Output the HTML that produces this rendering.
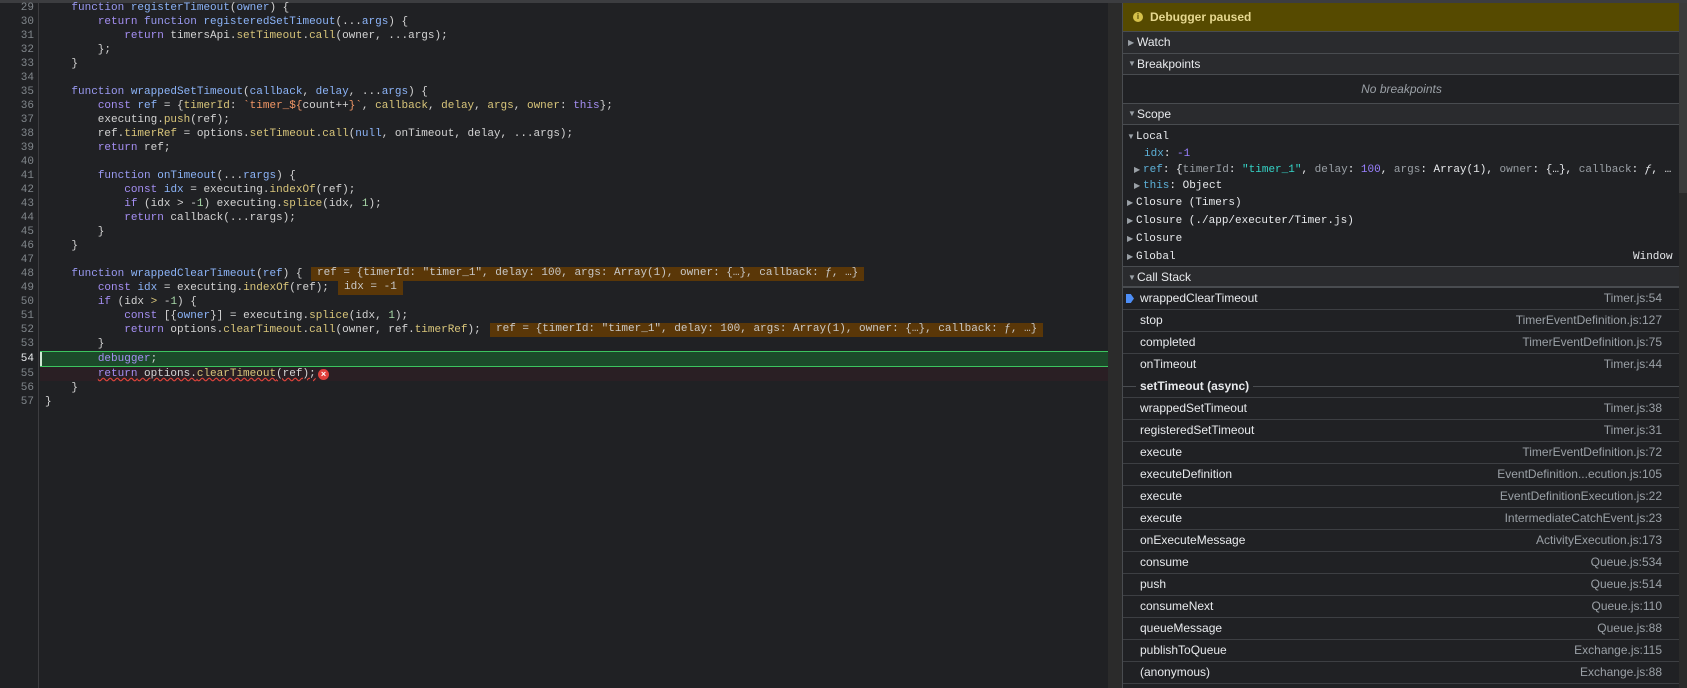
<!DOCTYPE html>
<html><head><meta charset="utf-8"><style>
*{margin:0;padding:0;box-sizing:border-box}
body{width:1687px;height:688px;overflow:hidden;background:#202124;font-family:"Liberation Sans",sans-serif;position:relative}
#top{position:absolute;left:0;top:0;width:1687px;height:3px;background:#3c3d40}
#gut{position:absolute;left:0;top:3px;width:39px;height:685px;background:#202124;border-right:1px solid #3d3d40}
.ln{position:absolute;left:0;width:34px;text-align:right;font:11px "Liberation Mono",monospace;color:#80868b;height:14px;line-height:14px}
.cl{position:absolute;left:45px;font:11px "Liberation Mono",monospace;color:#d4d4d4;white-space:pre;height:14px;line-height:14px}
.k{color:#9a9af2}.r{color:#a58ff3}.f{color:#8cb4f8}.y{color:#d8c57a}.o{color:#f29766}.n{color:#a8d8a8}.b{color:#8cb4f8}
.bd{position:absolute;height:14px;line-height:14px;background:#5a3708;color:#c8c8c8;font:11px "Liberation Mono",monospace;white-space:pre;padding:0 6px}
#div{position:absolute;left:1108px;top:3px;width:14px;height:685px;background:#2b2b2b}
#panel{position:absolute;left:1122px;top:3px;width:557px;height:685px;background:#202124;border-left:1px solid #494c50}
#sb{position:absolute;left:1679px;top:3px;width:8px;height:685px;background:#2a2a2a}
#sbt{position:absolute;left:1679px;top:3px;width:8px;height:190px;background:#3b3b3b}
.hd{position:absolute;left:0;width:557px;background:#2a2b2e;border-bottom:1px solid #494c50;color:#e8eaed;font-size:12px;padding-left:14px}
.hd .tri{position:absolute;left:5px;top:0;font-size:8px;color:#9aa0a6;line-height:inherit}
.t{position:absolute;font-size:8px;color:#9aa0a6;height:16px;line-height:16px}
.m{position:absolute;font:11px "Liberation Mono",monospace;color:#e8eaed;white-space:pre;height:16px;line-height:16px}
.cs{position:absolute;left:0;width:557px;height:22px;line-height:21px;border-bottom:1px solid #3d3f43;font-size:12px;color:#e8eaed}
.cs .nm{position:absolute;left:17px}
.cs .fl{position:absolute;right:18px;color:#9aa0a6}
</style></head><body>
<div id="top"></div>
<div id="gut"></div>
<div style="position:absolute;left:40px;top:351px;width:1068px;height:16px;background:#1c4a2a;border-top:1px solid #3cc45f;border-bottom:1px solid #3cc45f"></div>
<div style="position:absolute;left:40px;top:352px;width:2px;height:14px;background:#cfe8d4"></div>
<div style="position:absolute;left:40px;top:367px;width:1068px;height:14px;background:#2a1f24"></div>

<div class="ln" style="top:1px">29</div><div class="cl" style="top:1px">    <span class="k">function</span> <span class="f">registerTimeout</span>(<span class="b">owner</span>) {</div>
<div class="ln" style="top:15px">30</div><div class="cl" style="top:15px">        <span class="r">return</span> <span class="k">function</span> <span class="f">registeredSetTimeout</span>(...<span class="b">args</span>) {</div>
<div class="ln" style="top:29px">31</div><div class="cl" style="top:29px">            <span class="r">return</span> timersApi.<span class="y">setTimeout</span>.<span class="y">call</span>(owner, ...args);</div>
<div class="ln" style="top:43px">32</div><div class="cl" style="top:43px">        };</div>
<div class="ln" style="top:57px">33</div><div class="cl" style="top:57px">    }</div>
<div class="ln" style="top:71px">34</div>
<div class="ln" style="top:85px">35</div><div class="cl" style="top:85px">    <span class="k">function</span> <span class="f">wrappedSetTimeout</span>(<span class="b">callback</span>, <span class="b">delay</span>, ...<span class="b">args</span>) {</div>
<div class="ln" style="top:99px">36</div><div class="cl" style="top:99px">        <span class="r">const</span> <span class="b">ref</span> = {<span class="y">timerId</span>: <span class="o">`timer_${</span>count++<span class="o">}`</span>, <span class="y">callback</span>, <span class="y">delay</span>, <span class="y">args</span>, <span class="y">owner</span>: <span class="r">this</span>};</div>
<div class="ln" style="top:113px">37</div><div class="cl" style="top:113px">        executing.<span class="y">push</span>(ref);</div>
<div class="ln" style="top:127px">38</div><div class="cl" style="top:127px">        ref.<span class="y">timerRef</span> = options.<span class="y">setTimeout</span>.<span class="y">call</span>(<span class="b">null</span>, onTimeout, delay, ...args);</div>
<div class="ln" style="top:141px">39</div><div class="cl" style="top:141px">        <span class="r">return</span> ref;</div>
<div class="ln" style="top:155px">40</div>
<div class="ln" style="top:169px">41</div><div class="cl" style="top:169px">        <span class="k">function</span> <span class="f">onTimeout</span>(...<span class="b">rargs</span>) {</div>
<div class="ln" style="top:183px">42</div><div class="cl" style="top:183px">            <span class="r">const</span> <span class="b">idx</span> = executing.<span class="y">indexOf</span>(ref);</div>
<div class="ln" style="top:197px">43</div><div class="cl" style="top:197px">            <span class="r">if</span> (idx &gt; -<span class="n">1</span>) executing.<span class="y">splice</span>(idx, <span class="n">1</span>);</div>
<div class="ln" style="top:211px">44</div><div class="cl" style="top:211px">            <span class="r">return</span> callback(...rargs);</div>
<div class="ln" style="top:225px">45</div><div class="cl" style="top:225px">        }</div>
<div class="ln" style="top:239px">46</div><div class="cl" style="top:239px">    }</div>
<div class="ln" style="top:253px">47</div>
<div class="ln" style="top:267px">48</div><div class="cl" style="top:267px">    <span class="k">function</span> <span class="f">wrappedClearTimeout</span>(<span class="b">ref</span>) {</div>
<div class="bd" style="top:267px;left:311px">ref = {timerId: "timer_1", delay: 100, args: Array(1), owner: {…}, callback: ƒ, …}</div>
<div class="ln" style="top:281px">49</div><div class="cl" style="top:281px">        <span class="r">const</span> <span class="b">idx</span> = executing.<span class="y">indexOf</span>(ref);</div>
<div class="bd" style="top:281px;left:338px">idx = -1</div>
<div class="ln" style="top:295px">50</div><div class="cl" style="top:295px">        <span class="r">if</span> (idx <span class="y">&gt;</span> -<span class="n">1</span>) {</div>
<div class="ln" style="top:309px">51</div><div class="cl" style="top:309px">            <span class="r">const</span> [{<span class="b">owner</span>}] = executing.<span class="y">splice</span>(idx, <span class="n">1</span>);</div>
<div class="ln" style="top:323px">52</div><div class="cl" style="top:323px">            <span class="r">return</span> options.<span class="y">clearTimeout</span>.<span class="y">call</span>(owner, ref.<span class="y">timerRef</span>);</div>
<div class="bd" style="top:323px;left:490px">ref = {timerId: "timer_1", delay: 100, args: Array(1), owner: {…}, callback: ƒ, …}</div>
<div class="ln" style="top:337px">53</div><div class="cl" style="top:337px">        }</div>
<div class="ln" style="top:352px;color:#e8eaed">54</div><div class="cl" style="top:352px">        <span class="r">debugger</span>;</div>
<div class="ln" style="top:367px">55</div><div class="cl" style="top:367px">        <span class="r" style="text-decoration:underline wavy #e0453c">return</span><span style="text-decoration:underline wavy #e0453c"> options.<span class="y">clearTimeout</span>(ref);</span></div>
<div style="position:absolute;left:318px;top:369px;width:11px;height:11px;border-radius:50%;background:#e0403c;color:#fff;font:bold 9px/11px 'Liberation Sans',sans-serif;text-align:center">×</div>
<div class="ln" style="top:381px">56</div><div class="cl" style="top:381px">    }</div>
<div class="ln" style="top:395px">57</div><div class="cl" style="top:395px">}</div>

<div id="div"></div>
<div id="panel">
  <div style="position:absolute;left:0;top:0;width:557px;height:29px;background:#564a00;border-bottom:1px solid #494c50"></div>
  <div style="position:absolute;left:10px;top:9px;width:10px;height:10px;border-radius:50%;background:#d6c14a;color:#564a00;font:bold 8px/10px 'Liberation Sans';text-align:center">i</div>
  <div style="position:absolute;left:27px;top:7px;font-size:12px;font-weight:bold;color:#e6d890">Debugger paused</div>
  <div class="hd" style="top:29px;height:22px;line-height:21px"><span class="tri">▶</span>Watch</div>
  <div class="hd" style="top:51px;height:21px;line-height:20px"><span class="tri">▼</span>Breakpoints</div>
  <div style="position:absolute;top:72px;left:0;width:557px;height:29px;border-bottom:1px solid #494c50;text-align:center;line-height:28px;font-size:12px;font-style:italic;color:#9aa0a6">No breakpoints</div>
  <div class="hd" style="top:101px;height:21px;line-height:20px"><span class="tri">▼</span>Scope</div>
  <span class="t" style="left:4px;top:126px">▼</span><div class="m" style="left:13px;top:126px">Local</div>
  <div class="m" style="left:21px;top:143px"><span style="color:#5db0d7">idx</span>: <span style="color:#9980ff">-1</span></div>
  <span class="t" style="left:11px;top:159px">▶</span><div class="m" style="left:20px;top:159px"><span style="color:#5db0d7">ref</span>: {<span style="color:#9aa0a6">timerId</span>: <span style="color:#35d4c7">"timer_1"</span>, <span style="color:#9aa0a6">delay</span>: <span style="color:#9980ff">100</span>, <span style="color:#9aa0a6">args</span>: Array(1), <span style="color:#9aa0a6">owner</span>: {…}, <span style="color:#9aa0a6">callback</span>: <i>ƒ</i>, …</div>
  <span class="t" style="left:11px;top:175px">▶</span><div class="m" style="left:20px;top:175px"><span style="color:#5db0d7">this</span>: Object</div>
  <span class="t" style="left:4px;top:192px">▶</span><div class="m" style="left:13px;top:192px">Closure (Timers)</div>
  <span class="t" style="left:4px;top:210px">▶</span><div class="m" style="left:13px;top:210px">Closure (./app/executer/Timer.js)</div>
  <span class="t" style="left:4px;top:228px">▶</span><div class="m" style="left:13px;top:228px">Closure</div>
  <span class="t" style="left:4px;top:246px">▶</span><div class="m" style="left:13px;top:246px">Global</div>
  <div class="m" style="left:510px;top:246px">Window</div>
  <div class="hd" style="top:263px;height:22px;line-height:21px;border-top:1px solid #494c50;border-bottom:2px solid #494c50"><span class="tri">▼</span>Call Stack</div>

  <div class="cs" style="top:285px"><span style="position:absolute;left:3px;top:6px;width:8px;height:9px;background:#4d8ef7;clip-path:polygon(0 0,60% 0,100% 50%,60% 100%,0 100%)"></span><span class="nm">wrappedClearTimeout</span><span class="fl">Timer.js:54</span></div>
  <div class="cs" style="top:307px"><span class="nm">stop</span><span class="fl">TimerEventDefinition.js:127</span></div>
  <div class="cs" style="top:329px"><span class="nm">completed</span><span class="fl">TimerEventDefinition.js:75</span></div>
  <div class="cs" style="top:351px;border-bottom:none"><span class="nm">onTimeout</span><span class="fl">Timer.js:44</span></div>
  <div style="position:absolute;top:373px;left:0;width:557px;height:22px;border-bottom:1px solid #3d3f43">
    <div style="position:absolute;left:0;top:10px;width:557px;height:1px;background:#494c50"></div>
    <span style="position:absolute;left:13px;top:3px;padding:0 4px;background:#202124;font-size:12px;font-weight:bold;color:#e8eaed">setTimeout (async)</span>
  </div>
  <div class="cs" style="top:395px"><span class="nm">wrappedSetTimeout</span><span class="fl">Timer.js:38</span></div>
  <div class="cs" style="top:417px"><span class="nm">registeredSetTimeout</span><span class="fl">Timer.js:31</span></div>
  <div class="cs" style="top:439px"><span class="nm">execute</span><span class="fl">TimerEventDefinition.js:72</span></div>
  <div class="cs" style="top:461px"><span class="nm">executeDefinition</span><span class="fl">EventDefinition...ecution.js:105</span></div>
  <div class="cs" style="top:483px"><span class="nm">execute</span><span class="fl">EventDefinitionExecution.js:22</span></div>
  <div class="cs" style="top:505px"><span class="nm">execute</span><span class="fl">IntermediateCatchEvent.js:23</span></div>
  <div class="cs" style="top:527px"><span class="nm">onExecuteMessage</span><span class="fl">ActivityExecution.js:173</span></div>
  <div class="cs" style="top:549px"><span class="nm">consume</span><span class="fl">Queue.js:534</span></div>
  <div class="cs" style="top:571px"><span class="nm">push</span><span class="fl">Queue.js:514</span></div>
  <div class="cs" style="top:593px"><span class="nm">consumeNext</span><span class="fl">Queue.js:110</span></div>
  <div class="cs" style="top:615px"><span class="nm">queueMessage</span><span class="fl">Queue.js:88</span></div>
  <div class="cs" style="top:637px"><span class="nm">publishToQueue</span><span class="fl">Exchange.js:115</span></div>
  <div class="cs" style="top:659px"><span class="nm">(anonymous)</span><span class="fl">Exchange.js:88</span></div>
</div>
<div id="sb"></div><div id="sbt"></div>
</body></html>
